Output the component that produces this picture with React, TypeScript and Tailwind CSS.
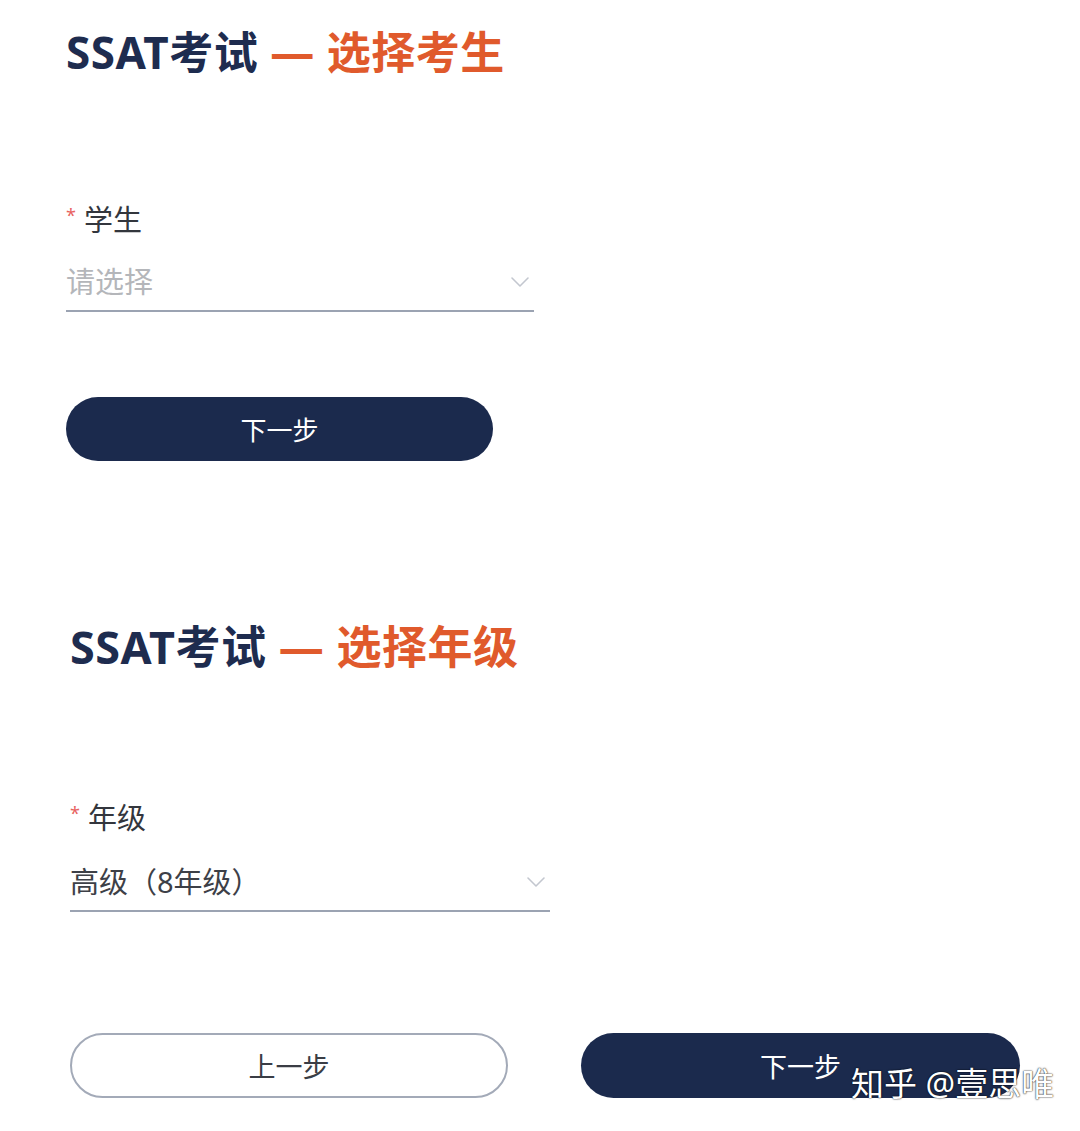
import React from 'react';

const FONT = { fontFamily: '"Noto Sans", "Noto Sans CJK SC", sans-serif' };

const Chevron: React.FC = () => (
  <svg width="20" height="12" viewBox="0 0 20 12" fill="none">
    <polyline points="2,2 10,10 18,2" stroke="#c3c7cf" strokeWidth="1.6" strokeLinecap="round" strokeLinejoin="round" />
  </svg>
);

interface TitleProps {
  step: string;
  size: string;
}

const StepTitle: React.FC<TitleProps> = ({ step, size }) => (
  <h1 className={`${size} h-[60px] leading-[60px] font-bold tracking-[0.5px] whitespace-nowrap`}>
    <span className="text-[#1e2c4f]">SSAT考试</span>
    <span className="text-[#e05a2c]"> — {step}</span>
  </h1>
);

interface SelectProps {
  label: string;
  value?: string;
  placeholder: string;
  width: string;
  gap: string;
}

const SelectField: React.FC<SelectProps> = ({ label, value, placeholder, width, gap }) => (
  <div className={width}>
    <div className="flex items-center h-[40px]">
      <span className="text-[#e8635f] text-[18px] leading-none mr-[8px] -mt-[10px]">*</span>
      <span className="text-[29px] leading-[40px] text-[#33363d]">{label}</span>
    </div>
    <div className={`${gap} flex items-center justify-between h-[40px] border-b-2 border-[#9ba3b2] box-content pb-[8px]`}>
      <span className={`text-[29px] leading-[40px] ${value ? 'text-[#3d4047]' : 'text-[#b4b6ba]'}`}>
        {value ?? placeholder}
      </span>
      <span className="mr-[4px]">
        <Chevron />
      </span>
    </div>
  </div>
);

export default function App() {
  return (
    <div className="relative w-[1080px] h-[1131px] bg-white overflow-hidden" style={FONT}>
      {/* step 1: student */}
      <section className="pl-[66px] pt-[22px]">
        <StepTitle step="选择考生" size="text-[44px]" />
        <div className="mt-[118px]">
          <SelectField label="学生" placeholder="请选择" width="w-[468px]" gap="mt-[22px]" />
        </div>
        <button className="mt-[85px] w-[427px] h-[64px] rounded-full bg-[#1b2a4d] text-white text-[26px] flex items-center justify-center pt-[3px]">
          下一步
        </button>
      </section>

      {/* step 2: grade */}
      <section className="pl-[70px] mt-[156px]">
        <StepTitle step="选择年级" size="text-[45px]" />
        <div className="mt-[121px]">
          <SelectField label="年级" value="高级（8年级）" placeholder="请选择" width="w-[480px]" gap="mt-[24px]" />
        </div>
        <div className="mt-[121px] flex gap-[73px]">
          <button className="w-[438px] h-[65px] rounded-full border-2 border-[#a3aab8] bg-white text-[#3a3d45] text-[27px] flex items-center justify-center pt-[3px]">
            上一步
          </button>
          <button className="w-[439px] h-[65px] rounded-full bg-[#1b2a4d] text-white text-[27px] flex items-center justify-center pt-[3px]">
            下一步
          </button>
        </div>
      </section>

      <div className="absolute left-[851px] top-[1063px] text-[33px] leading-[42px] text-white whitespace-nowrap [text-shadow:0_0_2px_rgba(0,0,0,0.7),0_0_1px_rgba(0,0,0,0.9)]">
        知乎 @壹思唯
      </div>
    </div>
  );
}
